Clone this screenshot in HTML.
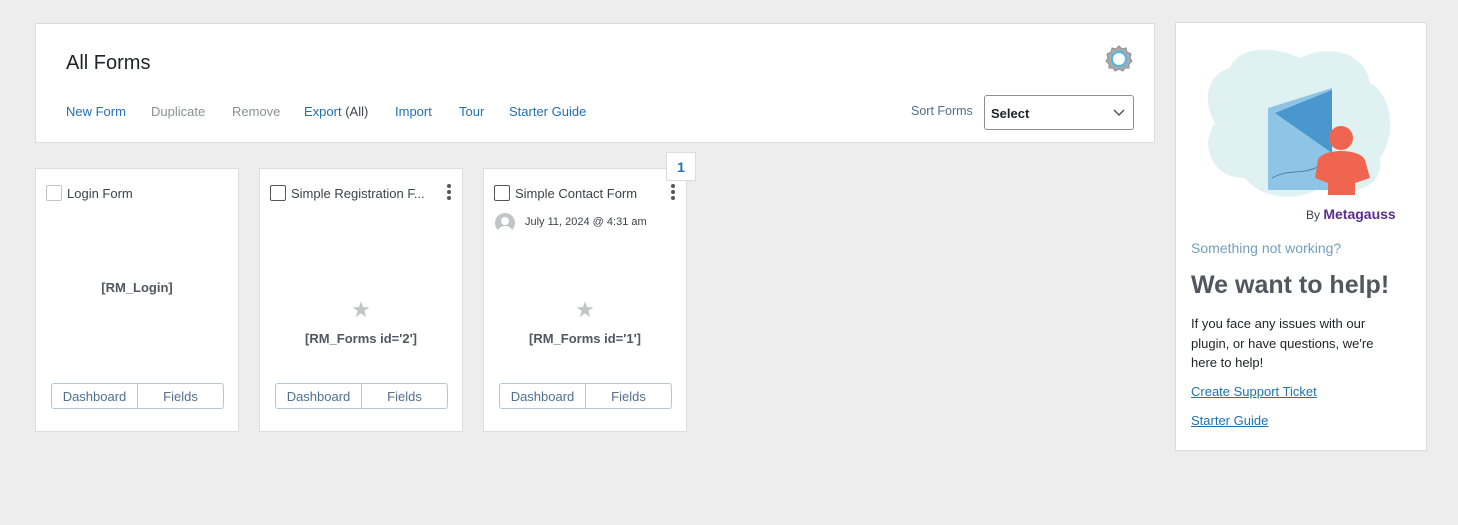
<!DOCTYPE html>
<html><head><style>
*{box-sizing:border-box;margin:0;padding:0}
body{width:1458px;height:525px;background:#ededed;font-family:"Liberation Sans",sans-serif;position:relative;overflow:hidden;color:#3c434a}
.abs{position:absolute}
.panel{background:#fff;border:1px solid #dcdcde}
a{color:#2271b1;text-decoration:none}
.nav{font-size:13px;top:104px}
.card{top:168px;width:204px;height:264px}
.cb{position:absolute;left:10px;top:16px;width:16px;height:16px;border:1.5px solid #50575e;border-radius:2px}
.title{position:absolute;left:31px;top:17px;font-size:13px;color:#3c434a}
.dots{position:absolute;right:11px;top:15px;width:4px}
.dots i{display:block;width:4px;height:4px;border-radius:50%;background:#50575e;margin-bottom:2px}
.code{position:absolute;left:0;right:0;text-align:center;font-weight:bold;font-size:13px;color:#50575e}
.star{position:absolute;left:0;right:0;text-align:center;top:128px;font-size:22px;color:#c3c4c7}
.bg{position:absolute;left:15px;top:214px;width:173px;height:26px;border:1px solid #b5c7d8;border-radius:3px;display:flex;font-size:13px;color:#50708f}
.bg span{display:flex;align-items:center;justify-content:center}
</style></head><body>
<div class="abs panel" style="left:35px;top:23px;width:1120px;height:120px"></div>
<div class="abs" style="left:66px;top:52px;font-size:20px;color:#1d2327">All Forms</div>
<svg class="abs" style="left:1105px;top:45px" width="28" height="28" viewBox="0 0 28 28"><path d="M14 1l3 3 4-1 1 4 4 2-1 4 2 3-3 3 0 4-4 0-2 3-4-2-4 2-2-3-4 0 0-4-3-3 2-3-1-4 4-2 1-4 4 1z" fill="#a7aaad" stroke="#8c8f94"/><circle cx="14" cy="14" r="7" fill="#fff" stroke="#4fb6e8" stroke-width="2"/></svg>
<a class="abs nav" style="left:66px">New Form</a>
<span class="abs nav" style="left:151px;color:#8c8f94">Duplicate</span>
<span class="abs nav" style="left:232px;color:#8c8f94">Remove</span>
<span class="abs nav" style="left:304px"><a>Export</a> <span style="color:#3c434a">(All)</span></span>
<a class="abs nav" style="left:395px">Import</a>
<a class="abs nav" style="left:459px">Tour</a>
<a class="abs nav" style="left:509px">Starter Guide</a>
<span class="abs" style="left:911px;top:104px;font-size:12.5px;color:#50708f">Sort Forms</span>
<div class="abs" style="left:984px;top:95px;width:150px;height:35px;border:1px solid #8c8f94;border-radius:3px;background:#fff;font-size:13px;font-weight:bold;color:#1d2327;padding:10px 6px">Select<svg style="position:absolute;right:8px;top:13px" width="12" height="8"><path d="M1 1l5 5 5-5" stroke="#50575e" fill="none" stroke-width="1.5"/></svg></div>

<div class="abs panel card" style="left:35px">
<div class="cb" style="border-color:#c3c4c7"></div><div class="title">Login Form</div>
<div class="code" style="top:111px">[RM_Login]</div>
<div class="bg"><span style="width:86px;border-right:1px solid #c3c4c7">Dashboard</span><span style="flex:1">Fields</span></div>
</div>
<div class="abs panel card" style="left:259px">
<div class="cb"></div><div class="title">Simple Registration F...</div>
<div class="dots"><i></i><i></i><i></i></div>
<div class="star">★</div>
<div class="code" style="top:162px">[RM_Forms id='2']</div>
<div class="bg"><span style="width:86px;border-right:1px solid #c3c4c7">Dashboard</span><span style="flex:1">Fields</span></div>
</div>
<div class="abs panel card" style="left:483px">
<div class="cb"></div><div class="title">Simple Contact Form</div>
<div class="dots"><i></i><i></i><i></i></div>
<div style="position:absolute;left:11px;top:44px;width:20px;height:20px;border-radius:50%;background:#c3c4c7;overflow:hidden"><div style="position:absolute;left:6px;top:4px;width:8px;height:8px;border-radius:50%;background:#fff"></div><div style="position:absolute;left:3px;top:13px;width:14px;height:10px;border-radius:50%;background:#fff"></div></div>
<div style="position:absolute;left:41px;top:47px;font-size:11px;color:#3c434a">July 11, 2024 @ 4:31 am</div>
<div class="star">★</div>
<div class="code" style="top:162px">[RM_Forms id='1']</div>
<div class="bg"><span style="width:86px;border-right:1px solid #c3c4c7">Dashboard</span><span style="flex:1">Fields</span></div>
</div>
<div class="abs" style="left:666px;top:152px;width:30px;height:29px;background:#fff;border:1px solid #dcdcde;color:#2271b1;font-size:14px;font-weight:bold;text-align:center;line-height:28px">1</div>

<div class="abs panel" style="left:1175px;top:22px;width:252px;height:429px"></div>
<svg class="abs" style="left:1200px;top:38px" width="200" height="175" viewBox="0 0 200 175">
<path d="M30 30 C40 5 80 10 100 20 C130 5 165 15 170 45 C195 60 195 100 180 120 C185 150 150 160 120 150 C95 165 60 160 45 140 C10 140 0 105 15 85 C0 60 10 35 30 30z" fill="#dff1f1"/>
<path d="M68 70 L132 50 L132 152 L68 152z" fill="#8ec4e6"/>
<path d="M75 75 L132 52 L132 115z" fill="#3a8cc8" opacity=".8"/>
<path d="M72 140 C90 130 100 138 120 128" stroke="#4a7fa8" fill="none"/>
<circle cx="141" cy="100" r="12" fill="#f06550"/>
<path d="M118 122 C122 110 160 110 165 122 L170 140 L155 145 L155 157 L128 157 L128 145 L115 140z" fill="#f06550"/>
</svg>
<div class="abs" style="left:1306px;top:206px;font-size:12px;color:#3c434a">By <b style="color:#5b2d8e;font-size:14px">Metagauss</b></div>
<div class="abs" style="left:1191px;top:240px;font-size:14px;color:#72a0c1">Something not working?</div>
<div class="abs" style="left:1191px;top:271px;font-size:25px;font-weight:bold;color:#50575e">We want to help!</div>
<div class="abs" style="left:1191px;top:314px;font-size:13px;line-height:19.5px;color:#1d2327;width:210px">If you face any issues with our plugin, or have questions, we're here to help!</div>
<a class="abs" style="left:1191px;top:384px;font-size:13px;text-decoration:underline;color:#2271b1">Create Support Ticket</a>
<a class="abs" style="left:1191px;top:413px;font-size:13px;text-decoration:underline;color:#2271b1">Starter Guide</a>
</body></html>
